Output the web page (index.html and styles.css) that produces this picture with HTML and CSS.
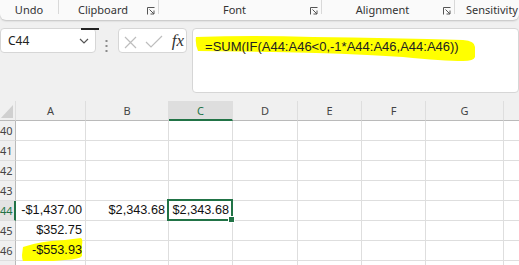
FILE: index.html
```html
<!DOCTYPE html>
<html lang="en">
<head>
    <meta charset="UTF-8">
    <meta name="viewport" content="width=device-width, initial-scale=1.0">
    <title>Book1 - Excel</title>
    <link rel="stylesheet" href="styles.css">
</head>
<body>
    <!-- ribbon group labels -->
    <div class="ribbon">
        <div class="group g-undo"><span class="label">Undo</span></div>
        <i class="sep"></i>
        <div class="group g-clip">
            <span class="label">Clipboard</span>
            <svg class="launcher" width="8" height="8" viewBox="0 0 8 8"><path d="M0.5 7.5V0.5H7.5M2.5 2.5L7 7M7 3.5V7H3.5" fill="none" stroke="#555" stroke-width="1"/></svg>
        </div>
        <i class="sep"></i>
        <div class="group g-font">
            <span class="label">Font</span>
            <svg class="launcher" width="8" height="8" viewBox="0 0 8 8"><path d="M0.5 7.5V0.5H7.5M2.5 2.5L7 7M7 3.5V7H3.5" fill="none" stroke="#555" stroke-width="1"/></svg>
        </div>
        <i class="sep"></i>
        <div class="group g-align">
            <span class="label">Alignment</span>
            <svg class="launcher" width="8" height="8" viewBox="0 0 8 8"><path d="M0.5 7.5V0.5H7.5M2.5 2.5L7 7M7 3.5V7H3.5" fill="none" stroke="#555" stroke-width="1"/></svg>
        </div>
        <i class="sep"></i>
        <div class="group g-sens"><span class="label">Sensitivity</span></div>
    </div>

    <!-- name box + formula bar -->
    <div class="fbar">
        <div class="namebox">
            <span>C44</span>
            <i class="nb-mark"></i>
            <svg class="chev" width="10" height="6" viewBox="0 0 10 6"><path d="M1 1L5 5L9 1" fill="none" stroke="#555" stroke-width="1.2"/></svg>
        </div>
        <div class="grip">
            <svg width="3" height="13" viewBox="0 0 3 13"><rect x="0.5" y="0" width="2" height="2" fill="#8a8a8a"/><rect x="0.5" y="5" width="2" height="2" fill="#8a8a8a"/><rect x="0.5" y="10" width="2" height="2" fill="#8a8a8a"/></svg>
        </div>
        <div class="fxbox">
            <svg width="50" height="25" viewBox="0 0 50 25"><path d="M6 9L17 20M17 9L6 20" stroke="#bdbdbd" stroke-width="1.2"/><path d="M27 14L32 19L43 8" fill="none" stroke="#bdbdbd" stroke-width="1.2"/></svg>
            <span class="fx">fx</span>
        </div>
        <div class="formula">
            <svg class="hl" width="290" height="40" viewBox="0 0 290 40"><path d="M3 8Q60 6 120 8Q200 9 270 11Q282 12 282 18L282 28Q281 32 270 32Q250 32 210 28Q150 24 80 23L5 22Q2 15 3 8Z" fill="#ffff00"/></svg>
            <span class="ftext">=SUM(IF(A44:A46&lt;0,-1*A44:A46,A44:A46))</span>
        </div>
    </div>

    <!-- worksheet -->
    <div class="sheet">
        <div class="hd corner"><svg width="14" height="15" viewBox="0 0 14 15"><path d="M13 2V16H0Z" fill="#d0d0d0"/></svg></div>
        <div class="hd">A</div>
        <div class="hd">B</div>
        <div class="hd hd-sel">C</div>
        <div class="hd">D</div>
        <div class="hd">E</div>
        <div class="hd">F</div>
        <div class="hd">G</div>
        <div class="hd"></div>

        <div class="rh">40</div><div class="c"></div><div class="c"></div><div class="c"></div><div class="c"></div><div class="c"></div><div class="c"></div><div class="c"></div><div class="c"></div>
        <div class="rh">41</div><div class="c"></div><div class="c"></div><div class="c"></div><div class="c"></div><div class="c"></div><div class="c"></div><div class="c"></div><div class="c"></div>
        <div class="rh">42</div><div class="c"></div><div class="c"></div><div class="c"></div><div class="c"></div><div class="c"></div><div class="c"></div><div class="c"></div><div class="c"></div>
        <div class="rh">43</div><div class="c"></div><div class="c"></div><div class="c"></div><div class="c"></div><div class="c"></div><div class="c"></div><div class="c"></div><div class="c"></div>
        <div class="rh rh-sel">44</div><div class="c">-$1,437.00</div><div class="c">$2,343.68</div><div class="c active">$2,343.68</div><div class="c"></div><div class="c"></div><div class="c"></div><div class="c"></div><div class="c"></div>
        <div class="rh">45</div><div class="c">$352.75</div><div class="c"></div><div class="c"></div><div class="c"></div><div class="c"></div><div class="c"></div><div class="c"></div><div class="c"></div>
        <div class="rh">46</div><div class="c marked"><svg class="blob" width="64" height="27" viewBox="0 0 64 27"><path d="M3 10Q20 4 45 3L61 1Q63 2 62 8L62 19Q60 22 45 23Q25 25 5 26Q2 25 2 18Z" fill="#ffff00"/></svg><span>-$553.93</span></div><div class="c"></div><div class="c"></div><div class="c"></div><div class="c"></div><div class="c"></div><div class="c"></div><div class="c"></div>
        <div class="rh"></div><div class="c"></div><div class="c"></div><div class="c"></div><div class="c"></div><div class="c"></div><div class="c"></div><div class="c"></div><div class="c"></div>
    </div>
</body>
</html>
```

FILE: styles.css
```css
*{
    box-sizing: border-box;
}

body{
    margin: 0;
    width: 519px;
    height: 265px;
    overflow: hidden;
    background-color: #f0f0f0;
    font-family: "Noto Sans", "Open Sans", sans-serif;
    color: #333;
}

/* ribbon */
.ribbon{
    display: flex;
    height: 20px;
    background-color: #fafafa;
    border-radius: 0 0 6px 6px;
    box-shadow: 0 1px 2px rgba(0, 0, 0, 0.2);
    font-size: 11px;
}

.group{
    display: flex;
    align-items: center;
    height: 20px;
}

.label{
    flex: 1;
    text-align: center;
    line-height: 20px;
}

.launcher{
    margin-right: 3px;
    margin-top: 2px;
}

.sep{
    width: 1px;
    height: 14px;
    background-color: #d9d9d9;
}

.g-undo{width: 58px;}
.g-clip{width: 99px;}
.g-font{width: 162px;}
.g-align{width: 132px;}
.g-sens{flex: 1;}
.g-sens .label{
    text-align: left;
    padding-left: 11px;
}

/* formula bar */
.fbar{
    display: flex;
    align-items: flex-start;
    margin-top: 8px;
    height: 65px;
}

.namebox{
    position: relative;
    display: flex;
    align-items: center;
    width: 100px;
    height: 25px;
    padding-left: 7px;
    background-color: #fff;
    border: 1px solid #d6d6d6;
    border-radius: 4px;
    font-size: 12px;
    color: #222;
}

.nb-mark{
    position: absolute;
    left: 80px;
    top: -1px;
    width: 18px;
    height: 2px;
    background-color: #222;
}

.chev{
    margin-left: auto;
    margin-right: 6px;
}

.grip{
    width: 22px;
    padding-top: 8px;
    padding-left: 9px;
}

.fxbox{
    display: flex;
    align-items: center;
    width: 72px;
    height: 25px;
    background-color: #fff;
    border: 1px solid #d6d6d6;
    border-radius: 4px;
}

.fx{
    margin-left: 3px;
    font-family: "Liberation Serif", serif;
    font-style: italic;
    font-size: 17px;
    color: #333;
}

.formula{
    position: relative;
    width: 340px;
    height: 65px;
    margin-left: 5px;
    padding: 5px 0 0 12px;
    background-color: #fff;
    border: 1px solid #d6d6d6;
    border-radius: 4px;
}

.hl{
    position: absolute;
    left: 0;
    top: 0;
}

.ftext{
    position: relative;
    font-family: "Liberation Sans", Arial, sans-serif;
    font-size: 13px;
    line-height: 18px;
    color: #222;
}

/* sheet */
.sheet{
    display: grid;
    grid-template-columns: 16px 70px 83px 64px 65px 64px 64px 78px 40px;
    grid-auto-rows: 20px;
    margin-top: 8px;
}

.hd{
    font-size: 11px;
    line-height: 19px;
    text-align: center;
    color: #444;
    background-color: #f0f0f0;
    border-right: 1px solid #dedede;
    border-bottom: 1px solid #bababa;
}

.corner{
    overflow: hidden;
}

.corner svg{
    display: block;
    margin-top: 2px;
}

.hd-sel{
    background-color: #dedede;
    color: #217346;
    border-bottom: 2px solid #217346;
}

.rh{
    overflow: hidden;
    font-size: 11px;
    line-height: 19px;
    text-align: right;
    padding-right: 4px;
    white-space: nowrap;
    color: #444;
    background-color: #f0f0f0;
    border-right: 1px solid #bababa;
    border-bottom: 1px solid #dedede;
}

.rh-sel{
    color: #217346;
    background-color: #e3e3e3;
    border-right: 2px solid #217346;
}

.c{
    position: relative;
    font-family: "Liberation Sans", Arial, sans-serif;
    font-size: 12.7px;
    line-height: 19px;
    text-align: right;
    padding-right: 3px;
    white-space: nowrap;
    color: #111;
    background-color: #fff;
    border-right: 1px solid #dedede;
    border-bottom: 1px solid #dedede;
}

/* selected cell frame and fill handle */
.active::after{
    content: "";
    position: absolute;
    left: -2px;
    top: -2px;
    right: -1px;
    bottom: -1px;
    border: 2px solid #217346;
}

.active::before{
    content: "";
    position: absolute;
    right: -3px;
    bottom: -3px;
    width: 5px;
    height: 5px;
    background-color: #217346;
    border: 1px solid #fff;
    z-index: 1;
}

.blob{
    position: absolute;
    left: 4px;
    top: -4px;
}

.marked span{
    position: relative;
}
```
